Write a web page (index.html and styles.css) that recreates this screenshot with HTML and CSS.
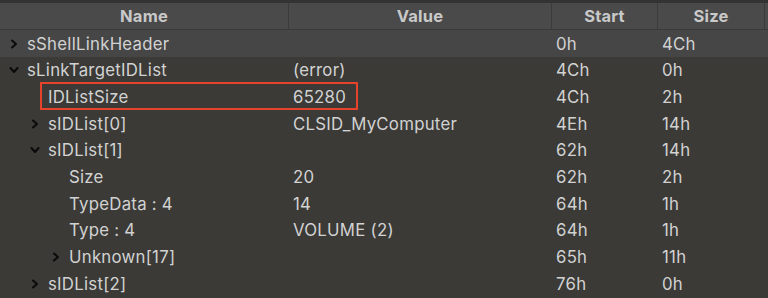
FILE: index.html
```html
<!DOCTYPE html>
<html>
<head>
<meta charset="utf-8">
<link rel="stylesheet" href="styles.css">
</head>
<body>
<div class="tree">
  <div class="head">
    <div class="hc">Name</div>
    <div class="hc">Value</div>
    <div class="hc">Start</div>
    <div class="hc">Size</div>
    <div class="hc last"></div>
  </div>
  <div class="row sel">
    <div class="c name l0"><svg class="chev" viewBox="0 0 10 10"><path d="M3 1.5 L7 5 L3 8.5"/></svg><span>sShellLinkHeader</span></div>
    <div class="c val"></div>
    <div class="c st">0h</div>
    <div class="c sz">4Ch</div>
  </div>
  <div class="row">
    <div class="c name l0"><svg class="chev" viewBox="0 0 10 10"><path d="M1.5 3 L5 7 L8.5 3"/></svg><span>sLinkTargetIDList</span></div>
    <div class="c val">(error)</div>
    <div class="c st">4Ch</div>
    <div class="c sz">0h</div>
  </div>
  <div class="row">
    <div class="c name l1"><span class="nochev"></span><span>IDListSize</span></div>
    <div class="c val">65280</div>
    <div class="c st">4Ch</div>
    <div class="c sz">2h</div>
    <div class="mark"></div>
  </div>
  <div class="row">
    <div class="c name l1"><svg class="chev" viewBox="0 0 10 10"><path d="M3 1.5 L7 5 L3 8.5"/></svg><span>sIDList[0]</span></div>
    <div class="c val">CLSID_MyComputer</div>
    <div class="c st">4Eh</div>
    <div class="c sz">14h</div>
  </div>
  <div class="row">
    <div class="c name l1"><svg class="chev" viewBox="0 0 10 10"><path d="M1.5 3 L5 7 L8.5 3"/></svg><span>sIDList[1]</span></div>
    <div class="c val"></div>
    <div class="c st">62h</div>
    <div class="c sz">14h</div>
  </div>
  <div class="row">
    <div class="c name l2"><span class="nochev"></span><span>Size</span></div>
    <div class="c val">20</div>
    <div class="c st">62h</div>
    <div class="c sz">2h</div>
  </div>
  <div class="row">
    <div class="c name l2"><span class="nochev"></span><span>TypeData : 4</span></div>
    <div class="c val">14</div>
    <div class="c st">64h</div>
    <div class="c sz">1h</div>
  </div>
  <div class="row">
    <div class="c name l2"><span class="nochev"></span><span>Type : 4</span></div>
    <div class="c val">VOLUME (2)</div>
    <div class="c st">64h</div>
    <div class="c sz">1h</div>
  </div>
  <div class="row">
    <div class="c name l2"><svg class="chev" viewBox="0 0 10 10"><path d="M3 1.5 L7 5 L3 8.5"/></svg><span>Unknown[17]</span></div>
    <div class="c val"></div>
    <div class="c st">65h</div>
    <div class="c sz">11h</div>
  </div>
  <div class="row">
    <div class="c name l1"><svg class="chev" viewBox="0 0 10 10"><path d="M3 1.5 L7 5 L3 8.5"/></svg><span>sIDList[2]</span></div>
    <div class="c val"></div>
    <div class="c st">76h</div>
    <div class="c sz">0h</div>
  </div>
</div>
</body>
</html>
```
FILE: styles.css
```css
html, body {
  margin: 0;
  padding: 0;
  width: 768px;
  height: 298px;
  overflow: hidden;
  background: #3b3a37;
  font-family: Inter, "Noto Sans", sans-serif;
}
.tree {
  padding-top: 3px;
  background: linear-gradient(#333333 0 3px, transparent 3px);
}
.head {
  display: grid;
  grid-template-columns: 289px 263px 106px 107px 3px;
  height: 26px;
  background: #4a4a4a;
  border-bottom: 1px solid #3a3a3a;
}
.hc {
  display: flex;
  align-items: center;
  justify-content: center;
  color: #c9c9c9;
  font-weight: 700;
  font-size: 16.5px;
  letter-spacing: 0.2px;
  border-right: 1px solid #3c3c3c;
}
.hc.last { border-right: none; }
.row {
  position: relative;
  display: grid;
  grid-template-columns: 293px 263px 106px 106px;
  height: 26.67px;
  color: #d2d2d2;
  font-size: 16.8px;
  letter-spacing: 0.25px;
}
.row.sel { background: #464646; }
.c {
  display: flex;
  align-items: center;
  white-space: nowrap;
  padding-top: 1px;
}
.name { padding-left: 9px; }
.name.l1 { padding-left: 30px; }
.name.l2 { padding-left: 51px; }
.chev, .nochev {
  width: 10px;
  height: 10px;
  flex: none;
  margin-right: 8px;
}
.chev path {
  fill: none;
  stroke: #0a0a0a;
  stroke-width: 2;
  stroke-linecap: round;
  stroke-linejoin: round;
}
.mark {
  position: absolute;
  left: 40px;
  top: -1px;
  width: 314px;
  height: 24px;
  border: 2px solid #e5432c;
}
```
